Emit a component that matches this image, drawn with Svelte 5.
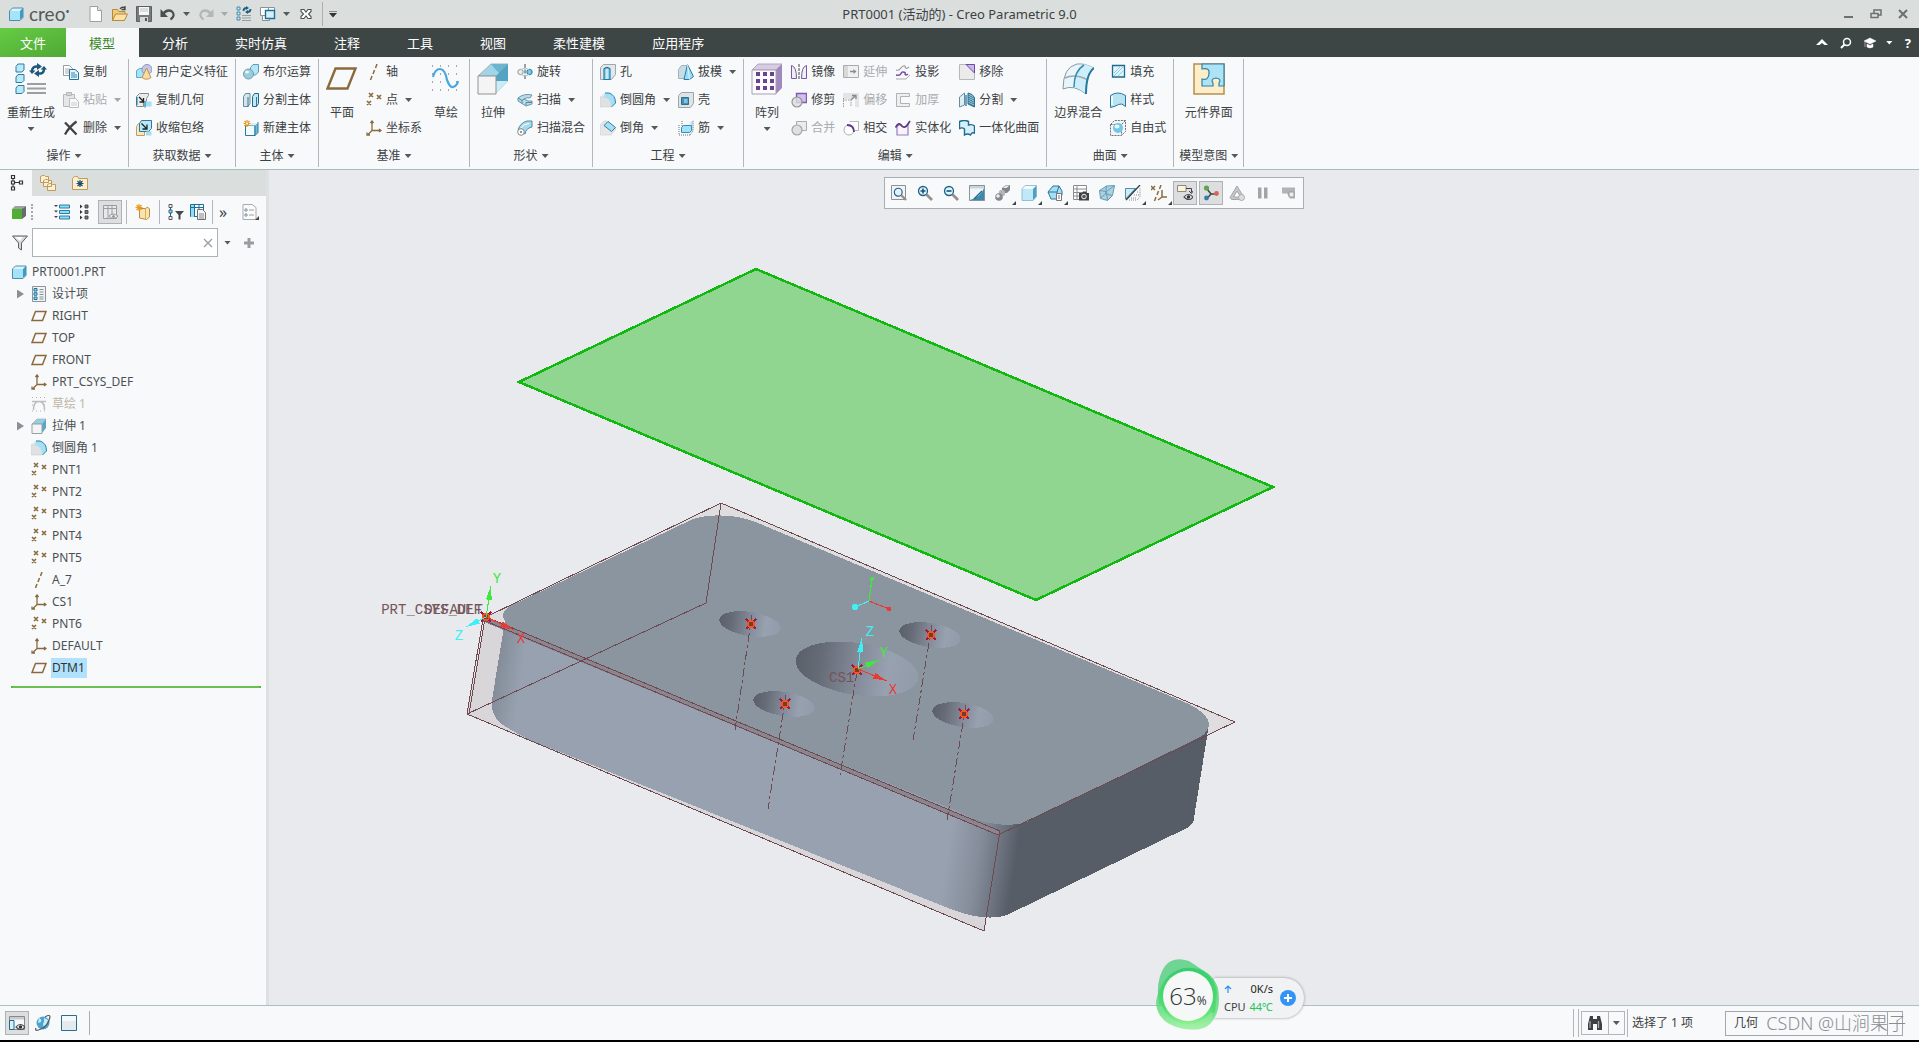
<script lang="ts">
  type Command = { icon: string; name: string; menu?: boolean; off?: boolean };
  type Column = { big?: Command; items?: Command[] };
  type Group = { name: string; columns: Column[] };

  const cube = '<path d="M2 5l3-3h10l-3 3z" fill="#d9f4fd"/><path d="M12 5l3-3v9l-3 3z" fill="#3b9cc4"/><path d="M2 5h10v9H2z" fill="#a5e3f9"/><path d="M1.500 5l3-3H15v9.500l-3 3H1.500z" fill="none" stroke="#4a90ae"/>';
  const plane = '<path d="M4.500 3.500h10.500l-3.500 9h-10.500z" fill="none" stroke="#8a6a3c" stroke-width="1.500"/>';
  const csys = '<path d="M6 1v9.500h9M6 10.500L1.500 15M4.500 3L6 1l1.500 2M13 9l2 1.500-2 1.500M1 12.500V15h3" fill="none" stroke="#8a6a3c" stroke-width="1.300"/>';
  const points = '<path d="M3 1l4 4M7 1L3 5M11 3l4 4M15 3l-4 4M1 9l4 4M5 9l-4 4" stroke="#8a6a3c" stroke-width="1.600"/>';
  const axis = '<path d="M11 0L9.500 4M8.500 6L7 10M6 12l-1.500 4" stroke="#8a6a3c" stroke-width="1.500"/>';
  const round = '<path d="M0 5l4-4h7l-6 4z" fill="#e6e9ea"/><path d="M0 5h5q6 1 6 10H0z" fill="#dfe1e2" stroke="#c4c8ca" stroke-width=".5"/><path d="M5 1h4q7 3 6.500 10l-4 4Q11 6 4 5z" fill="#a5dff5"/><path d="M5 1h4q6.500 2 6.500 10l-4 4" fill="none" stroke="#2781aa"/>';
  const extrude = '<path d="M1 6l5-5h9l-4 5z" fill="#8ed0e8" stroke="#a9afb2" stroke-width=".7"/><path d="M11 6l4-5v9l-4 5z" fill="#5aa6c7"/><path d="M1 6h10v9.500H1z" fill="#f3f4f4" stroke="#9a9fa1"/>';
  const regen = '<g fill="#c4ecfa" stroke="#2b7697" stroke-width=".8"><path d="M1 1h3v3H1zM1 6h3v3H1zM1 11h3v3H1z"/></g><path d="M6 9.500h9M6 12h9M6 14.500h9" stroke="#9a9da0"/><path d="M7.500 5Q7.500 2 10.500 2M14.500 3Q14.500 6 11.500 6" fill="none" stroke="#1c5f85" stroke-width="1.800"/><path d="M10 0l3 2-3 2zM12 4L9 6l3 2z" fill="#1c5f85"/>';
  const lens = '<circle cx="6" cy="6" r="4.500" fill="#e0f4fb" stroke="#1c6288" stroke-width="1.300"/><path d="M9.500 9.500L15 15" stroke="#9b8c85" stroke-width="2.600"/>';
  const eye = '<path d="M7 12q4-5 9 0-4 5-9 0z" fill="#fff" stroke="#45494b" stroke-width="1.200"/><circle cx="11.500" cy="12" r="1.800" fill="#333"/>';
  const chips = '<g fill="#8fdcf8" stroke="#1d6f98" stroke-width=".9"><path d="M5.500 1h10v3h-10zM5.500 6.500h10v3h-10zM5.500 12h10v3h-10z"/></g><path d="M0 1h4L2 3zM0 6.500h4L2 8.500zM0 12h4L2 14z" fill="#444"/>';

  const icons: Record<string, string> = {
    cube, plane, csys, points, axis, round, extrude, regen,
    newFile: '<path d="M2 .5h7.500L13.500 4.500v11H2z" fill="#fff" stroke="#9a9fa2"/><path d="M9.500.5v4h4" fill="#e3e5e6" stroke="#9a9fa2"/>',
    open: '<path d="M.5 14.500V3.500h5l1.500 2h6v3" fill="#f3c97a" stroke="#b58a3d"/><path d="M.5 14.500L3.500 8h12l-3 6.500z" fill="#fde1a4" stroke="#b58a3d"/><path d="M8 3q2-3 5-1M13 0v3.500h-3.500" fill="none" stroke="#444" stroke-width="1.300"/>',
    save: '<path d="M.5.5h15v15H.5z" fill="#777b7e" stroke="#5d6163"/><path d="M3 1h10v8H3z" fill="#f5f6f7"/><path d="M4 11h8v5H4z" fill="#d5d8da"/><path d="M9 12h2v3H9z" fill="#555"/><path d="M4 3h8M4 5h8" stroke="#c1c5c7"/>',
    undo: '<path d="M2.500 8.500Q7 2.500 12 5.500q4 4-1.500 8" fill="none" stroke="#4a4f50" stroke-width="2.200"/><path d="M.5 3v8h7.500z" fill="#4a4f50"/>',
    redo: '<path d="M13.500 8.500Q9 2.500 4 5.500q-4 4 1.500 8" fill="none" stroke="#b3b7b7" stroke-width="2.200"/><path d="M15.500 3v8H8z" fill="#b3b7b7"/>',
    windows: '<path d="M.5 1.500h9v8h-9z" fill="#fff" stroke="#8b9093"/><path d="M8.500 1.500h6v4h-6zM2.500 9.500h7v5h-7z" fill="#fff" stroke="#8b9093"/><path d="M5.500 4.500h9v8h-9z" fill="#d5f0fa" stroke="#1d6f98" stroke-width="1.400"/>',
    close: '<path d="M3 3.500h3L8 6l2-2.500h3v2L10.500 8 13 10.500v2h-3L8 10l-2 2.500H3v-2L5.500 8 3 5.500z" fill="#fff" stroke="#4c5152" stroke-width="1.100"/>',
    copy: '<path d="M.5 1.500h6l3 3v7h-9z" fill="#fff" stroke="#999d9f"/><path d="M2 5h5M2 7h5M2 9h4" stroke="#aaa"/><path d="M6.500 5.500h5.500l3.500 3v7h-9z" fill="#e4f6fc" stroke="#247298"/><path d="M8 9h4M8 11h6M8 13h6" stroke="#3586ab"/>',
    paste: '<path d="M.5 2.500h11v12H.5z" fill="#e5e6e6" stroke="#b5b8b9"/><path d="M3.500.5h5v3h-5z" fill="#d3d5d6" stroke="#b5b8b9"/><path d="M6.500 6.500h6l3 3v6h-9z" fill="#fafafa" stroke="#bbbebf"/><path d="M8 11h6M8 13h6" stroke="#c9cbcc"/>',
    remove: '<path d="M2 2.500q5 5 11.500 12M13.500 1.500Q6 7 2 14.500" fill="none" stroke="#3e4243" stroke-width="2.300"/>',
    udf: '<path d="M.5 6.500l3-2h6v7l-2 2h-7z" fill="#a5e3f9" stroke="#64a9c5"/><circle cx="11" cy="5.500" r="5" fill="#c5c9e6" stroke="#8d93bd"/><path d="M10.500 4L15 13.500q-4.500 3.500-9 0z" fill="#f7dba2" stroke="#bb9550"/>',
    copyGeom: '<path d="M.5 4.500l3-3h9v2l-2 3v3h-3v5h-7z" fill="#e9ebec" stroke="#868c8f"/><path d="M.5 5v8" stroke="#277ca6" stroke-width="2"/><path d="M3 5l4 4M7.500 6v4h-4" stroke="#222" fill="none" stroke-width="1.300"/><path d="M8.500 9.500h7v5h-7z" fill="#9fe0f7"/><path d="M9 9.500v6" stroke="#1d6f98"/>',
    shrink: '<path d="M.5 6.500l2-3h11v8h-5v4h-8z" fill="#fbe6bd" stroke="#b9a06d"/><path d="M3.500 3.500l2-3h10v8l-3 3h-9z" fill="#b9e8f8" stroke="#287a9f"/><path d="M5.500 3.500l5 5M11 4.500V9H6.500" stroke="#222" fill="none" stroke-width="1.300"/><path d="M10 11.500h5.500v4H10z" fill="#9fe0f7"/>',
    boolean: '<path d="M7.500 3.500l2.500-3h5.500V8l-3 3h-5z" fill="#b4e6f8" stroke="#5c9cb8"/><circle cx="5.500" cy="10" r="5" fill="#9ccbdd" stroke="#6e9cad"/><ellipse cx="4" cy="8" rx="2" ry="1.500" fill="#e9f7fb"/>',
    splitBody: '<path d="M.5 4.500l2-3h4.500v10l-2 3H.5z" fill="#d2e5ec" stroke="#678c9c"/><path d="M9.500 4.500l2-3h4v10l-2 3h-4z" fill="#c0e9f7" stroke="#1f668a"/><path d="M5 5v10M13.500 5v10" stroke="#3d7590"/>',
    newBody: '<path d="M2.500 5.500h9.500v10H2.500z" fill="#f1fbfe" stroke="#287a9f"/><path d="M12 5.500l3-3v10l-3 3z" fill="#72bcd8" stroke="#287a9f"/><path d="M6 3h9l-3 2.500H5z" fill="#d9f2fa"/><path d="M4 0v7M.5 3.500h7M1.500 1l5 5M6.500 1l-5 5" stroke="#e79b1c" stroke-width="1.200"/><circle cx="4" cy="3.500" r="1" fill="#fff"/>',
    revolve: '<path d="M8 0v16" stroke="#444" stroke-dasharray="4 1.500"/><circle cx="3.500" cy="8" r="2.700" fill="#e8e9ea" stroke="#999"/><circle cx="12.500" cy="8" r="2.700" fill="#7cc9e6" stroke="#1f7aa5"/><path d="M4 5.500q4-3 8 0M4 10.500q4 3 8 0" fill="none" stroke="#9ec9d8"/>',
    sweep: '<path d="M1 6q6-5 14-3l-2 3q-3-1-6 1l4 2h4v3l-6 2-8-5z" fill="#b7dcea" stroke="#6d97a8"/><path d="M1 6l4 2.500 2-1.500M5 8.500v3M9 13v-2.500h6" fill="none" stroke="#55889c"/>',
    sweepBlend: '<path d="M1 10Q3 3 10 1h5v6q-6 1-7 7z" fill="#a9daec" stroke="#4d8ca6"/><circle cx="4" cy="12" r="3.300" fill="#fff" stroke="#85898b"/><path d="M4 8q2-4 8-4.500" stroke="#fff" fill="none"/><circle cx="4" cy="12" r="1" fill="#777"/>',
    hole: '<path d="M.5 3.500l3-3h12v10l-4 5H.5z" fill="#e4e7e9" stroke="#a1a6a9"/><path d="M4 15.500V5q3-3 6 0v10.500z" fill="#8fd4ee" stroke="#217aa4" stroke-width="1.200"/><path d="M7 5v10" stroke="#fff"/>',
    chamfer: '<path d="M0 5l4-4h3l9 8-5 6H0z" fill="#e4e6e7" stroke="#c9cccd" stroke-width=".6"/><path d="M8 1.500l7.500 6-4 4-7.500-6z" fill="#a5e1f6" stroke="#1f7199" stroke-width=".9"/>',
    draft: '<path d="M.5 5.500l3-4h6l-1 13H.5z" fill="#c6dde5" stroke="#a2b2b8"/><path d="M9.500.5l6 12-4 3H6z" fill="#9cdcf4" stroke="#277ba2"/><path d="M9.500.5l2 15" stroke="#d9f5fd"/>',
    shell: '<path d="M.5 3.500l3-3h12v11l-3 4H.5z" fill="#dfe3e5" stroke="#9fa4a6"/><path d="M3.500 5.500h7v7h-7z" fill="#4d8eab" stroke="#287294"/><path d="M6 7h3.500v4H6z" fill="#7cc8e4"/>',
    rib: '<path d="M1 5v10h11M4 1v10M15 1v10l-3 4" stroke="#6e7375" stroke-dasharray="1 1" fill="none"/><path d="M4.500 6l8-1V2l3-2v11l-4 2h-7z" fill="#b0d2de" opacity=".7"/><path d="M3.500 7.500l2-2h8v5l-2 2h-8z" fill="#9fe3fb" stroke="#3d8cae"/>',
    mirror: '<path d="M8 0v16" stroke="#444" stroke-dasharray="3 1"/><path d="M.5 14.500v-13q5 1 5 13zM15.500 14.500v-13q-5 1-5 13z" fill="#f1edf6" stroke="#755b9d"/>',
    trim: '<path d="M5.500 1.500h10v9h-10z" fill="#cfc0f0" stroke="#7e5cb0" stroke-width="1.400"/><circle cx="6" cy="10" r="5" fill="#ddd" fill-opacity=".8" stroke="#929597" stroke-width="1.200"/>',
    merge: '<path d="M5.500 1.500h10v9h-10z" fill="#ececec" stroke="#aaadad"/><circle cx="6" cy="10" r="5" fill="#e0e0e0" stroke="#a3a6a6" stroke-width="1.200"/>',
    extend: '<path d="M.5 1.500h15v12H.5z" fill="#f0f0f0" stroke="#a9acad"/><path d="M1 2h4v11H1z" fill="#d8d9d9"/><path d="M7 7.500h5" stroke="#8a8d8e" stroke-width="1.500"/><path d="M10.500 5l3 2.500-3 2.500z" fill="#8a8d8e"/>',
    offset: '<path d="M0 1h16v14h-4V7H0z" fill="#e3e4e4"/><path d="M.5 6v9M0 8h8v7" fill="none" stroke="#999" stroke-dasharray="1.500 1"/><path d="M8 8l4-4M9 3.500h4V7" fill="none" stroke="#888" stroke-width="1.300"/>',
    intersect: '<path d="M6.500 1.500h9v9h-7" fill="#fff" stroke="#b6b8b9"/><circle cx="6" cy="10" r="5" fill="#fff" stroke="#adb0b1"/><path d="M4 5q7 0 7 7" fill="none" stroke="#5f3a93" stroke-width="1.800"/>',
    project: '<path d="M1 6q3 1 5-2t4-2q0 4 4 1" fill="none" stroke="#94979a" stroke-width="1.200"/><path d="M1 11q4 1 5-1.500t4-1q0 4 3 1.500" fill="none" stroke="#7a4ba5" stroke-width="1.600"/><path d="M1 15h10l4-4" fill="none" stroke="#a9acae"/>',
    thicken: '<path d="M14.500 1.500H1.500v13h13v-3H5.500v-7h9z" fill="#eee" stroke="#b0b2b3"/>',
    solidify: '<path d="M2 15V6.500q3-3 5 0 3 2 6-2.500V15z" fill="#f7f2fc" stroke="#9a7bbd" stroke-width="1.200"/><path d="M.5 7.500Q4 1 7 6q3 3 6-2l2-3" fill="none" stroke="#5c3b86" stroke-width="1.700"/>',
    removeSurface: '<path d="M.5.5h15v15H.5z" fill="#ebebeb" stroke="#b6b9ba"/><path d="M7 .5h8.500V9z" fill="#c8b8ea" stroke="#7148a2"/>',
    split: '<path d="M.5 5l5-4v12l-5 2z" fill="#ddeef4" stroke="#6a8d9c"/><path d="M7 3v11" stroke="#2c7596" stroke-width="1.300"/><path d="M9 1l4 1.500 2.500 3V15L9 12z" fill="#7fbcd3" stroke="#2c6c8a"/><path d="M10 3v9M12 4v9M14 5v9" stroke="#205a77" stroke-dasharray="1 1"/>',
    unify: '<path d="M.5 1.500q5-2 9 0V5q4-1 6 1v7q-3-1-4 2-3-2-6 0V9q-2-2-5-.5z" fill="#d5f0fa" stroke="#1f6a8f" stroke-width="1.400"/>',
    fill: '<path d="M2.500 1.500h12v11.500h-12z" fill="#dff4fb" stroke="#1f6a8f" stroke-width="1.300"/><path d="M4 9l6-6M4 12l9-9M8 12l5-5" stroke="#8fcbe2"/>',
    style: '<path d="M.5 3.500q7-5 15 0v11q-4-4-7-2t-8 3z" fill="#b8e3f3" stroke="#2c7596"/><path d="M2 4v9" stroke="#fff" stroke-width="1.500"/>',
    freestyle: '<path d="M.5 4.500h11v11H.5zM.5 4.500l4-4h11v11l-4 4M15.500.5l-4 4" fill="#f3f4f5" stroke="#6b7073" stroke-dasharray="2 1"/><circle cx="8" cy="8" r="5" fill="#74c6e8"/><ellipse cx="7" cy="6.500" rx="2.500" ry="2" fill="#e3f7fd"/>',
    collector: '<path d="M3.500.5h3v3h-3zM3.500 6h3v3h-3zM3.500 12h3v3h-3zM11.500 6h3v3h-3z" fill="none" stroke="#333" stroke-width="1.200"/><path d="M5 4v2M5 9v3M7 7.500h4" stroke="#333"/>',
    folders: '<g fill="#fdf0d2" stroke="#c19a5a"><path d="M.5 1.500l2-1h2l1 1h3v6h-8zM3.500 5.500l2-1h2l1 1h3v6h-8zM7.500 9.500l2-1h2l1 1h3v6h-8z"/></g>',
    favorites: '<path d="M.5 3.500q1-2 3-2h2l1 2h9v11H.5z" fill="#fdf0d2" stroke="#c19a5a"/><path d="M8 5v7M4.500 8.500h7M5.500 6l5 5M10.500 6l-5 5" stroke="#1c4f6e" stroke-width="1.200"/>',
    greenCube: '<path d="M1 5l3-3h11l-3 3z" fill="#9da1a3"/><path d="M11 5l4-3v10l-4 3z" fill="#686c6e"/><path d="M1 5h10v10H1z" fill="#4fae33"/>',
    expand: chips,
    collapse: '<g fill="#777" stroke="#444" stroke-width=".9"><path d="M9 1h3v3H9zM9 6.500h3v3H9zM9 12h3v3H9z"/></g><path d="M4 .5v4l2.500-2zM4 6v4l2.500-2zM4 11.500v4l2.500-2z" fill="#333"/>',
    columns: '<path d="M1.500 1.500h13v13h-13zM1.500 4.500h13M6 2v12M10 2v9" fill="#e7e8e9" stroke="#999d9f"/><path d="M7 12q4-4 9 0-4 5-9 0z" fill="#eee" stroke="#999"/><circle cx="11.500" cy="12.500" r="1.500" fill="#999"/>',
    newTree: '<path d="M4.500 4.500h6l2-1.500 2 2v8l-3 2.500-7-1.500z" fill="#fbe3ae" stroke="#b98d3e"/><path d="M10.500 5v10.500" stroke="#d6b069"/><path d="M4 0v7M.5 3.500h7M1.500 1l5 5M6.500 1l-5 5" stroke="#ea9c1e" stroke-width="1.200"/>',
    treeFilter: '<path d="M1 .5h3v3H1zM1 12.500h3v3H1z" fill="#fff" stroke="#555"/><path d="M1 6h3v3H1z" fill="#8fdcf8" stroke="#1d6f98"/><path d="M2.500 3.500V6M2.500 9v3.500" stroke="#555"/><path d="M7 7h9l-3.500 4v4.500h-2V11z" fill="#45494b"/>',
    treeColumns: '<path d="M.5.5h13v12H.5z" fill="#fff" stroke="#1d6f98"/><path d="M1 1h3v12H1z" fill="#8fdcf8"/><path d="M4.500 1v12M9 1v4M1 3.500h12" stroke="#1d6f98"/><path d="M7.500 5.500h5l3 3v7h-8z" fill="#f4f4f4" stroke="#6b7072"/><path d="M9 10h5M9 12h5M9 14h5" stroke="#85898b"/>',
    sheet: '<path d="M1 .5h9l4 3v12H1z" fill="#fbfbfb" stroke="#a7abad"/><circle cx="4" cy="6" r="1.200" fill="none" stroke="#6d8d99"/><circle cx="4" cy="11" r="1.200" fill="none" stroke="#6d8d99"/><path d="M7 6h5M7 11h5" stroke="#9a9ea0"/>',
    funnel: '<path d="M.5 1h15L9.500 8v7l-3-2V8z" fill="#d5d7d9" stroke="#5d6264"/><path d="M3 2h8L8 6z" fill="#fff"/>',
    design: '<path d="M1.500.5h13v15h-13z" fill="#eef5f8" stroke="#8c9497"/><path d="M3 2.500h3v2.500H3zM3 6.700h3v2.500H3zM3 11h3v2.500H3z" fill="#9bdcf5" stroke="#1d6f98"/><path d="M8.500 3.500h4M8.500 6h4M8.500 8.500h4M8.500 11h4M8.500 13h4" stroke="#8b8f91"/>',
    sketchOff: '<path d="M2.500 14q0-8.500 5.500-8.500t5.500 8.500M1 5.500h14" fill="none" stroke="#bdbfbf" stroke-width="1.600"/><path d="M1 1.500h15M1 9h3M13 9h3M1 15h15" stroke="#b9b3a2" stroke-dasharray="1 3"/>',
    zoomFit: '<path d="M.5.5h14v14H.5z" fill="#f2f3f4" stroke="#8d9294"/><g transform="translate(2 2) scale(.87)">' + lens + '</g>',
    zoomIn: lens + '<path d="M3.500 6h5M6 3.500v5" stroke="#1c4f6e" stroke-width="1.600"/>',
    zoomOut: lens + '<path d="M3.500 6h5" stroke="#1c4f6e" stroke-width="1.600"/>',
    repaint: '<path d="M.5.5h15v15H.5z" fill="#3c8aae" stroke="#8d9294"/><path d="M1 3h14q-3 9-14 12z" fill="#f3f7f8"/><path d="M1 1h14v2.500H1z" fill="#c5d5db"/><path d="M5 14l8-8" stroke="#1f6a8f" stroke-width="1.500"/>',
    render: '<path d="M7 3l4-3h4v5l-3 3H7z" fill="#808587"/><circle cx="7" cy="8" r="3.200" fill="#b2b6b8"/><circle cx="4" cy="12" r="3.800" fill="#858a8c"/><circle cx="3" cy="11" r="1.800" fill="#eee"/><path d="M8 3l3-2.500h3.500L11.500 3z" fill="#eee"/>',
    display: '<path d="M1 4l3-3.500h11.500L12 4z" fill="#f1fafd"/><path d="M12 4l3.500-3.500v11L12 15.500z" fill="#4e9fc0"/><path d="M1 4h11v11.500H1z" fill="#bfe9f8"/><path d="M1 4l3-3.500h11.500v11L12 15.500H1z" fill="none" stroke="#7fb4c9" stroke-width=".8"/>',
    saved: '<path d="M1 7l5-6h6l3 5v4l-3 4H4z" fill="#a5dff4" stroke="#2b7697"/><path d="M1 7h9l2-6M10 7v7" fill="none" stroke="#2b7697"/><path d="M9.500 8.500h5v7h-5z" fill="#fff" stroke="#777"/><path d="M11 11h2M11 13h2" stroke="#777"/>',
    viewManager: '<path d="M.5.5h13v14H.5zM4 1v13M1 4h12M1 7.500h12M1 11h12" fill="#fff" stroke="#888d90"/><path d="M6 8h3l1-1.500h3L14 8h2v7.500H6z" fill="#3e4243"/><circle cx="11" cy="11.500" r="2.300" fill="#555" stroke="#eee"/>',
    perspective: '<path d="M.5 5.500l7-4.500 8-.5-2 10-5 5-7-2z" fill="#a9d3e3" stroke="#6b9cb0"/><path d="M.5 5.500l7 1 8-6M7.500 6.500l1 9M7.500 1l-1 8-5 4M6.500 9l7 1.500" fill="none" stroke="#6b9cb0"/>',
    section: '<path d="M.5 3.500h10L.5 14z" fill="#cdebf6" stroke="#2b7697" stroke-width=".8"/><path d="M4 15h8l3-3V3M6 13h6M9 10h5M12 7h2" fill="none" stroke="#888" stroke-dasharray="1 1"/><path d="M1 15L15 0" stroke="#34393b" stroke-width="1.300"/>',
    datums: '<path d="M0 1l4 4M4 1L0 5M10 0L8.500 4M7.500 6L6 10M5 12l-1.500 4M11 5v7h5M11 12l-4 3" fill="none" stroke="#8a6a3c" stroke-width="1.500"/>',
    annotations: '<path d="M.5.5h8.500v6H.5z" fill="#fff4d6" stroke="#888"/><path d="M9 3.500h5.500v4M12 6l2.500 2.500L16 6" fill="none" stroke="#444"/>' + eye,
    spin: '<path d="M4 4l4 5M8 9h6M8 9l-4 4.500" stroke="#444" stroke-width="1.500"/><circle cx="3.500" cy="3" r="2.600" fill="#5aa74b"/><circle cx="13.500" cy="8.500" r="2.400" fill="#d66557"/><circle cx="3.500" cy="13" r="2.400" fill="#2f7faa"/>',
    simulate: '<path d="M8 1l7 11.500-1.500 2h-11L1 12.500z" fill="#c5c8c9" stroke="#a3a6a8"/><path d="M8 6l3.500 6h-7z" fill="#fff" stroke="#a3a6a8"/><circle cx="12.500" cy="12.500" r="3" fill="#ddd" stroke="#aaa"/>',
    pause: '<path d="M3 2.500h3.500v11H3zM9 2.500h3.500v11H9z" fill="#a2a5a7"/>',
    stop: '<path d="M1 2.500h13v11H9l-3-5H1z" fill="#b1b4b6"/><path d="M8 7h5v5H8z" fill="#ececec" stroke="#999"/>',
    navigator: '<path d="M.5 1.500h15v13H.5z" fill="#f7f7f7" stroke="#85898b"/><path d="M1 2h14v2.500H1z" fill="#c9cccd"/><path d="M.5 5.500h4.500v9H.5z" fill="#d8eff7" stroke="#1f6a8f"/>' + eye,
    browser: '<circle cx="8" cy="8" r="6.500" fill="#4aa4d3"/><path d="M4 3q3 1 2 4L3 8M9 3l4 2-1 5-3 2q-2-3 0-5z" fill="#cbeaf6"/><path d="M1 13q-2 4 5 1t9-12q0-3-5 0" fill="none" stroke="#555b5e" stroke-width="1.200"/>',
    fullscreen: '<path d="M.5.5h15v15H.5z" fill="#e3ebee" stroke="#2b6e8c"/><path d="M1 1h14v5H1z" fill="#f4f8f9"/>',
    find: '<path d="M3 1h3v3h4V1h3l2 8v6h-5V9H6v6H1V9z" fill="#3c4042"/><path d="M3 6v7M11.500 6v7" stroke="#a3a7a9" stroke-width="1.300"/>'
  };

  const bigIcons: Record<string, string> = {
    regenerate: '<g fill="#b8ebfa" stroke="#337b9b"><path d="M1 3.500l2-2.500h6v6l-2 2H1zM1 14l2-2.500h6v6l-2 2H1zM1 25l2-2.500h6v6l-2 2H1z"/></g><path d="M12 21h19M12 25.500h19M12 30h19" stroke="#9c9ea0" stroke-width="2"/><path d="M17 8q0-5 6-4.500M29 6q0 5-6 4.500" fill="none" stroke="#1c587b" stroke-width="2.500"/><path d="M22 0l5 3.500-5 3.500zM24 7l-5 3.500 5 3.500zM14 7.500h6.500L17 11zM25.500 6.500H32L29 3z" fill="#1c587b"/>',
    plane: '<path d="M9.500 5.500h20l-8 20H1.500z" fill="none" stroke="#8a6a3c" stroke-width="2.400"/>',
    sketch: '<path d="M2 3h28M2 11h28M2 19h28M2 27h28" stroke="#555" stroke-dasharray="1 7"/><path d="M3 14Q5 6 10 6t7 11q3 8 6 7 4-1 5-6" fill="none" stroke="#49a9df" stroke-width="2.200"/>',
    extrude: '<path d="M1 13L14 1h17L20 13z" fill="#9fd5e8" stroke="#a9b0b3"/><path d="M14 1h17v17L19 7z" fill="#6fb4cf"/><path d="M19 13L31 1v17L19 30z" fill="#56a2c3"/><path d="M19 18l12 0L19 30z" fill="#c9ecf7"/><path d="M1 13h18v18H1z" fill="#f4f4f4" stroke="#8f9496"/>',
    pattern: '<path d="M1 7l6-6h24L25 7z" fill="#d6cde2" stroke="#b3a6c4"/><path d="M25 7l6-6v24l-6 6z" fill="#a189bf"/><path d="M1 7h24v24H1z" fill="#fbfafc" stroke="#a8a0b3"/><path d="M5 9h4v4H5zM12 9h4v4h-4zM19 9h4v4h-4zM5 16h4v4H5zM12 16h4v4h-4zM19 16h4v4h-4zM5 23h4v4H5zM12 23h4v4h-4zM19 23h4v4h-4z" fill="#684390"/>',
    blend: '<path d="M1 26Q1 4 15 1q7-1 17 4-8 5-8 26-12-10-23-5z" fill="#e8f6fb" stroke="#86999f"/><path d="M15 1q7-1 17 4-8 5-8 26-7-6-12-7Q12 6 22 1" fill="#cdeefa"/><path d="M3 15q10-5 23 2" fill="none" stroke="#9aa9af" stroke-width="1.500"/><path d="M12 24Q12 8 22 2" fill="none" stroke="#388cac" stroke-width="1.500"/><path d="M32 5q-8 6-8 26" fill="none" stroke="#287a9b" stroke-width="2"/>',
    component: '<path d="M1 1h30v30H1z" fill="#fdedc9" stroke="#b58f4c" stroke-width="1.500"/><path d="M9 1h22v22h-5v-3q3-4-3-5-6 1-3 5v3H9v-7q6 2 7-5t-7-5z" fill="#aee3f6" stroke="#2d83a6" stroke-width="1.200"/>'
  };

  const groups: Group[] = [
    { name: '操作', columns: [
      { big: { icon: 'regenerate', name: '重新生成', menu: true } },
      { items: [{ icon: 'copy', name: '复制' }, { icon: 'paste', name: '粘贴', menu: true, off: true }, { icon: 'remove', name: '删除', menu: true }] }
    ] },
    { name: '获取数据', columns: [
      { items: [{ icon: 'udf', name: '用户定义特征' }, { icon: 'copyGeom', name: '复制几何' }, { icon: 'shrink', name: '收缩包络' }] }
    ] },
    { name: '主体', columns: [
      { items: [{ icon: 'boolean', name: '布尔运算' }, { icon: 'splitBody', name: '分割主体' }, { icon: 'newBody', name: '新建主体' }] }
    ] },
    { name: '基准', columns: [
      { big: { icon: 'plane', name: '平面' } },
      { items: [{ icon: 'axis', name: '轴' }, { icon: 'points', name: '点', menu: true }, { icon: 'csys', name: '坐标系' }] },
      { big: { icon: 'sketch', name: '草绘' } }
    ] },
    { name: '形状', columns: [
      { big: { icon: 'extrude', name: '拉伸' } },
      { items: [{ icon: 'revolve', name: '旋转' }, { icon: 'sweep', name: '扫描', menu: true }, { icon: 'sweepBlend', name: '扫描混合' }] }
    ] },
    { name: '工程', columns: [
      { items: [{ icon: 'hole', name: '孔' }, { icon: 'round', name: '倒圆角', menu: true }, { icon: 'chamfer', name: '倒角', menu: true }] },
      { items: [{ icon: 'draft', name: '拔模', menu: true }, { icon: 'shell', name: '壳' }, { icon: 'rib', name: '筋', menu: true }] }
    ] },
    { name: '编辑', columns: [
      { big: { icon: 'pattern', name: '阵列', menu: true } },
      { items: [{ icon: 'mirror', name: '镜像' }, { icon: 'trim', name: '修剪' }, { icon: 'merge', name: '合并', off: true }] },
      { items: [{ icon: 'extend', name: '延伸', off: true }, { icon: 'offset', name: '偏移', off: true }, { icon: 'intersect', name: '相交' }] },
      { items: [{ icon: 'project', name: '投影' }, { icon: 'thicken', name: '加厚', off: true }, { icon: 'solidify', name: '实体化' }] },
      { items: [{ icon: 'removeSurface', name: '移除' }, { icon: 'split', name: '分割', menu: true }, { icon: 'unify', name: '一体化曲面' }] }
    ] },
    { name: '曲面', columns: [
      { big: { icon: 'blend', name: '边界混合' } },
      { items: [{ icon: 'fill', name: '填充' }, { icon: 'style', name: '样式' }, { icon: 'freestyle', name: '自由式' }] }
    ] },
    { name: '模型意图', columns: [{ big: { icon: 'component', name: '元件界面' } }] }
  ];

  const tabs = ['模型', '分析', '实时仿真', '注释', '工具', '视图', '柔性建模', '应用程序'];
  let activeTab = $state('模型');

  const tree = [
    { icon: 'design', name: '设计项', open: true },
    { icon: 'plane', name: 'RIGHT' },
    { icon: 'plane', name: 'TOP' },
    { icon: 'plane', name: 'FRONT' },
    { icon: 'csys', name: 'PRT_CSYS_DEF' },
    { icon: 'sketchOff', name: '草绘 1', off: true },
    { icon: 'extrude', name: '拉伸 1', open: true },
    { icon: 'round', name: '倒圆角 1' },
    { icon: 'points', name: 'PNT1' },
    { icon: 'points', name: 'PNT2' },
    { icon: 'points', name: 'PNT3' },
    { icon: 'points', name: 'PNT4' },
    { icon: 'points', name: 'PNT5' },
    { icon: 'axis', name: 'A_7' },
    { icon: 'csys', name: 'CS1' },
    { icon: 'points', name: 'PNT6' },
    { icon: 'csys', name: 'DEFAULT' },
    { icon: 'plane', name: 'DTM1' }
  ];
  let selected = $state('DTM1');

  const viewTools = [
    { icon: 'zoomFit' }, { icon: 'zoomIn' }, { icon: 'zoomOut' }, { icon: 'repaint' },
    { icon: 'render', more: true }, { icon: 'display', more: true }, { icon: 'saved', more: true },
    { icon: 'viewManager' }, { icon: 'perspective' }, { icon: 'section', more: true },
    { icon: 'datums', more: true }, { icon: 'annotations', on: true }, { icon: 'spin', on: true },
    { icon: 'simulate' }, { icon: 'pause' }, { icon: 'stop' }
  ];

  const holes = [[750, 624], [784, 704], [930, 635], [963, 715]];
  const marks = [[751, 624], [785, 704], [931, 635], [964, 714], [857, 670], [486, 617]];
  const axes = [
    [752, 615, 735, 730],
    [786, 695, 768, 809],
    [932, 625, 913, 740],
    [966, 705, 947, 820],
    [857, 672, 840, 775]
  ];
</script>

{#snippet icon(name: string)}
  <svg class="icon" viewBox="0 0 16 16" width="16" height="16" aria-hidden="true">{@html icons[name]}</svg>
{/snippet}

{#snippet arrow(x1: number, y1: number, x2: number, y2: number, color: string)}
  <g stroke={color} fill={color}>
    <line {x1} {y1} {x2} {y2} />
    <path
      stroke="none"
      transform="translate({x2} {y2}) rotate({(Math.atan2(y2 - y1, x2 - x1) * 180) / Math.PI})"
      d="M0 0l-14-3v6z"
    />
  </g>
{/snippet}

<div class="app">
  <header class="title-bar">
    <div class="brand">{@render icon('cube')}<span>creo<sup>•</sup></span></div>
    <div class="quick">
      <button aria-label="新建">{@render icon('newFile')}</button>
      <button aria-label="打开">{@render icon('open')}</button>
      <button aria-label="保存">{@render icon('save')}</button>
      <button aria-label="撤消">{@render icon('undo')}<i class="caret"></i></button>
      <button class="off" aria-label="重做">{@render icon('redo')}<i class="caret"></i></button>
      <button aria-label="重新生成">{@render icon('regen')}</button>
      <button aria-label="窗口">{@render icon('windows')}<i class="caret"></i></button>
      <button aria-label="关闭">{@render icon('close')}</button>
      <button class="customize" aria-label="自定义快速访问工具栏"><i class="caret"></i></button>
    </div>
    <h1>PRT0001 (活动的) - Creo Parametric 9.0</h1>
    <div class="window-buttons">
      <button aria-label="最小化"><svg viewBox="0 0 12 12" width="12" height="12"><path d="M1 9h9" stroke-width="2" /></svg></button>
      <button aria-label="还原"><svg viewBox="0 0 12 12" width="12" height="12"><path d="M4 5V2h7v5H8M1 5.500h7v4H1z" stroke-width="1.500" /></svg></button>
      <button aria-label="关闭窗口"><svg viewBox="0 0 12 12" width="12" height="12"><path d="M2 2l8 8M10 2l-8 8" stroke-width="2" /></svg></button>
    </div>
  </header>

  <nav class="tabs">
    <button class="file">文件</button>
    {#each tabs as tab}
      <button class:active={tab === activeTab} onclick={() => (activeTab = tab)}>{tab}</button>
    {/each}
    <div class="help">
      <button aria-label="最小化功能区"><svg viewBox="0 0 12 12" width="12" height="12"><path d="M0 8l6-6 6 6H8.500L6 6 3.500 8z" fill="#fff" /></svg></button>
      <button aria-label="搜索"><svg viewBox="0 0 12 12" width="12" height="12"><circle cx="7" cy="5" r="3.500" fill="none" stroke="#fff" stroke-width="1.500" /><path d="M4.500 7.500L1 11" stroke="#fff" stroke-width="2" /></svg></button>
      <button class="learn" aria-label="学习"><svg viewBox="0 0 12 12" width="12" height="12"><path d="M0 4l6-3 6 3-6 3zM3 7l3 1.500L9 7v3q-3 2-6 0zM1 5v5" fill="#fff" stroke="#fff" stroke-width=".5" /></svg><i class="caret"></i></button>
      <button class="question">?</button>
    </div>
  </nav>

  <section class="ribbon">
    {#each groups as group}
      <div class="group">
        <div class="columns">
          {#each group.columns as { big, items }}
            {#if big}
              <button class="big">
                <svg viewBox="0 0 32 32" width="32" height="32" aria-hidden="true">{@html bigIcons[big.icon]}</svg>
                <span>{big.name}</span>
                {#if big.menu}<i class="caret"></i>{/if}
              </button>
            {:else if items}
              <div class="column">
                {#each items as item}
                  <button class="command" disabled={item.off}>
                    {@render icon(item.icon)}<span>{item.name}</span>
                    {#if item.menu}<i class="caret"></i>{/if}
                  </button>
                {/each}
              </div>
            {/if}
          {/each}
        </div>
        <button class="group-name">{group.name}<i class="caret"></i></button>
      </div>
    {/each}
  </section>

  <main>
    <aside>
      <div class="panel-tabs">
        <button class="active" aria-label="模型树">{@render icon('collector')}</button>
        <button aria-label="文件夹浏览器">{@render icon('folders')}</button>
        <button aria-label="收藏夹">{@render icon('favorites')}</button>
      </div>
      <div class="tree-tools">
        <button class="root-type" aria-label="模型">{@render icon('greenCube')}</button>
        <button aria-label="全部展开">{@render icon('expand')}</button>
        <button aria-label="全部折叠">{@render icon('collapse')}</button>
        <button class="on" aria-label="树列">{@render icon('columns')}</button>
        <button class="bar" aria-label="新建树">{@render icon('newTree')}</button>
        <button class="bar" aria-label="树过滤器">{@render icon('treeFilter')}</button>
        <button aria-label="列显示">{@render icon('treeColumns')}</button>
        <button class="bar overflow" aria-label="更多">»</button>
        <button class="more settings" aria-label="设置">{@render icon('sheet')}</button>
      </div>
      <div class="search">
        {@render icon('funnel')}
        <div class="box">
          <input type="text" aria-label="过滤模型树" />
          <button aria-label="清除"><svg viewBox="0 0 10 10" width="10" height="10"><path d="M1 1l8 8M9 1L1 9" stroke="#9a9d9f" stroke-width="1.300" /></svg></button>
        </div>
        <button aria-label="过滤选项"><i class="caret"></i></button>
        <button aria-label="添加"><svg viewBox="0 0 12 12" width="12" height="12"><path d="M6 1v10M1 6h10" stroke="#9a9d9f" stroke-width="3" /></svg></button>
      </div>
      <ul class="tree">
        <li class="root">{@render icon('cube')}<span>PRT0001.PRT</span></li>
        {#each tree as node}
          <li class:off={node.off} class:selected={node.name === selected}>
            <i class="twist" class:open={node.open}></i>
            {@render icon(node.icon)}
            <button onclick={() => (selected = node.name)}>{node.name}</button>
          </li>
        {/each}
      </ul>
      <div class="insert-here"></div>
    </aside>

    <div class="viewport">
      <svg class="scene" viewBox="269 170 1650 835">
        <defs>
          <linearGradient id="front" gradientUnits="userSpaceOnUse" x1="946" y1="862" x2="1014" y2="872">
            <stop offset="0" stop-color="#98a1b0" />
            <stop offset=".45" stop-color="#858d9b" />
            <stop offset=".75" stop-color="#6d7480" />
            <stop offset="1" stop-color="#575d67" />
          </linearGradient>
          <linearGradient id="corner" gradientUnits="userSpaceOnUse" x1="497" y1="665" x2="523" y2="669">
            <stop offset="0" stop-color="#838c98" />
            <stop offset="1" stop-color="#838c98" stop-opacity="0" />
          </linearGradient>
          <linearGradient id="bore">
            <stop offset=".03" stop-color="#5c616b" />
            <stop offset=".2" stop-color="#666c76" />
            <stop offset=".5" stop-color="#838b99" />
            <stop offset=".75" stop-color="#98a1b0" />
            <stop offset="1" stop-color="#929baa" />
          </linearGradient>
        </defs>

        <path class="datum" d="M756 269l517 218-237 113-517-218z" />

        <g fill="#d9d6d9">
          <path d="M486 617l514 214-16 100-517-217z" />
          <path d="M486 617l235-114 514 219-235 109z" fill="#dfddde" />
        </g>

        <path fill="url(#front)" d="M507 608L492 700q-2 12 8 23 25 17 60 29l393 158q33 12 54 5l180-87q7-4 7-10l15-94-184 88z" />
        <path fill="url(#corner)" d="M507 608L492 700q-2 12 8 23l26 14 14-120z" />
        <path fill="#8b95a0" d="M508 607l185-88q20-6 45-2 10 2 20 6l424 178q24 10 27 22 0 9-9 14l-173 85q-20 6-46-1L530 637q-26-10-27-21 0-4 5-9z" />

        {#each holes as [x, y]}
          <ellipse rx="31" ry="12" transform="translate({x} {y}) rotate(9)" fill="url(#bore)" />
        {/each}
        <ellipse rx="62" ry="26" transform="translate(857 669) rotate(9)" fill="url(#bore)" />

        <path d="M486 617l514 214-2 4-516-214z" fill="#8b858f" />
        <g class="wire">
          <path d="M486 617L721 503l514 219-237 113M721 503l-15 100L467 714" />
          <path d="M486 617l514 214-16 100-517-217 16-95z" />
          <path d="M483 620l515 215M485 618l-16 96" />
          {#each axes as [x1, y1, x2, y2]}
            <line {x1} {y1} {x2} {y2} stroke-dasharray="9 3 3 3" />
          {/each}
        </g>

        <g class="tag">
          <text x="482" y="614" text-anchor="end">PRT_CSYS_DEF</text>
          <text x="483" y="614" text-anchor="end">DEFAULT</text>
          <text x="829" y="682">CS1</text>
        </g>

        {#each marks as [x, y]}
          <g transform="translate({x} {y})">
            <path d="M-5-5L5 5M5-5L-5 5" stroke="#a81446" stroke-width="2" />
            <circle r="3" fill="#7c3a26" stroke="#ef5a20" stroke-width="1.500" />
          </g>
        {/each}

        {@render arrow(486, 617, 491, 586, '#3fe83f')}
        {@render arrow(486, 617, 514, 630, '#ea3a34')}
        {@render arrow(486, 617, 466, 627, '#3cf0f6')}
        {@render arrow(858, 669, 862, 638, '#3cf0f6')}
        {@render arrow(858, 669, 879, 660, '#3fe83f')}
        {@render arrow(858, 669, 887, 681, '#ea3a34')}

        <g class="axis-name">
          <text x="497" y="583" fill="#3fe83f">Y</text>
          <text x="521" y="643" fill="#ea3a34">X</text>
          <text x="459" y="640" fill="#3cf0f6">Z</text>
          <text x="870" y="636" fill="#3cf0f6">Z</text>
          <text x="884" y="657" fill="#3fe83f">Y</text>
          <text x="893" y="694" fill="#ea3a34">X</text>
        </g>

        <g stroke-width="1.200">
          <path d="M869 601l3-22" stroke="#3fe83f" /><circle cx="872" cy="579" r="2" fill="#3fe83f" />
          <path d="M869 601l-14 6" stroke="#3cf0f6" /><circle cx="855" cy="607" r="3" fill="#3cf0f6" />
          <path d="M869 601l20 8" stroke="#ea3a34" /><circle cx="889" cy="609" r="2.500" fill="#ea3a34" />
        </g>
      </svg>

      <div class="view-tools">
        {#each viewTools as tool}
          <button class:on={tool.on} class:more={tool.more} aria-label={tool.icon}>{@render icon(tool.icon)}</button>
        {/each}
      </div>
    </div>
  </main>

  <footer>
    <div class="toggles">
      <button class="on" aria-label="导航器">{@render icon('navigator')}</button>
      <button aria-label="浏览器">{@render icon('browser')}</button>
      <button aria-label="全屏">{@render icon('fullscreen')}</button>
    </div>
    <div class="status">
      <div class="find">
        <button aria-label="查找">{@render icon('find')}</button>
        <button aria-label="查找选项"><i class="caret"></i></button>
      </div>
      <output>选择了 1 项</output>
      <select aria-label="选择过滤器">
        <option>几何</option>
      </select>
      <span class="watermark">CSDN @山涧果子</span>
    </div>
  </footer>

  <div class="monitor">
    <svg class="ring" viewBox="0 0 66 72" width="66" height="72" aria-hidden="true">
      <defs>
        <linearGradient id="glow" x2="0" y2="1">
          <stop offset="0" stop-color="#35cf6b" />
          <stop offset=".7" stop-color="#4fdc6f" />
          <stop offset="1" stop-color="#8df08c" />
        </linearGradient>
      </defs>
      <path d="M4 46Q0 22 10 8 18-2 34 3l12 8q14 8 16 24l-2 20z" fill="#2fc866" opacity=".65" />
      <path d="M1 44q4-26 28-34 26-2 34 20 4 24-8 36-8 8-26 5Q2 66 1 44z" fill="url(#glow)" opacity=".75" />
      <circle cx="33" cy="38" r="28" fill="url(#glow)" />
      <circle cx="33" cy="38" r="25" fill="#f6f7f7" />
    </svg>
    <div class="load">63<small>%</small></div>
    <div class="meters">
      <div><svg viewBox="0 0 8 8" width="8" height="8"><path d="M4 8V1M1 4l3-3 3 3" fill="none" stroke="#2f8ef0" stroke-width="1.200" /></svg><b>0K/s</b></div>
      <div><span>CPU</span><em>44℃</em></div>
    </div>
    <button aria-label="加速"><svg viewBox="0 0 16 16" width="16" height="16"><circle cx="8" cy="8" r="8" fill="#3494f5" /><path d="M8 4v8M4 8h8" stroke="#fff" stroke-width="2" /></svg></button>
  </div>
</div>

<style>
  :global(body) {
    margin: 0;
    overflow: hidden;
  }

  .app {
    position: relative;
    display: flex;
    flex-direction: column;
    height: 100vh;
    box-sizing: border-box;
    border-bottom: 2px solid #000;
    background: #f8f9fb;
    color: #3c4143;
    font: 12px/16px 'Noto Sans', 'Noto Sans CJK SC', sans-serif;
  }

  button,
  input,
  select {
    margin: 0;
    padding: 0;
    border: none;
    background: none;
    color: inherit;
    font: inherit;
  }

  button {
    display: flex;
    align-items: center;
    white-space: nowrap;
  }

  svg {
    display: block;
    flex: none;
  }

  .caret {
    flex: none;
    width: 7px;
    height: 4px;
    background: #55595b;
    clip-path: polygon(0 0, 100% 0, 50% 100%);
  }

  /* title bar */
  .title-bar {
    position: relative;
    display: flex;
    align-items: center;
    height: 28px;
    background: #dadfde;
  }

  .brand {
    display: flex;
    align-items: center;
    gap: 5px;
    padding-left: 8px;
    color: #54595a;
    font: 19px/24px Lato, sans-serif;
  }

  .brand span {
    width: 43px;
  }

  .brand sup {
    font-size: 7px;
    line-height: 0;
    vertical-align: 7px;
  }

  .quick {
    display: flex;
    gap: 8px;
    padding-left: 16px;
  }

  .quick button {
    gap: 7px;
  }

  .quick .off .caret {
    background: #a3a8a8;
  }

  .quick .customize {
    height: 24px;
    padding-left: 6px;
    border-left: 1px solid #a9b0af;
  }

  .customize .caret {
    width: 8px;
    height: 7px;
    background: #333;
    clip-path: polygon(0 0, 100% 0, 100% 15%, 0 15%, 0 35%, 100% 35%, 50% 100%, 0 35%);
  }

  h1 {
    position: absolute;
    left: 0;
    right: 0;
    margin: 0;
    font-size: 13px;
    font-weight: 400;
    text-align: center;
    pointer-events: none;
  }

  .window-buttons {
    display: flex;
    gap: 15px;
    margin-left: auto;
    padding-right: 10px;
  }

  .window-buttons path {
    fill: none;
    stroke: #6b7070;
  }

  /* tabs */
  .tabs {
    display: flex;
    height: 29px;
    background: #3d4545;
    color: #fff;
    font-size: 13px;
  }

  .tabs > button {
    padding: 0 24px 0 23px;
  }

  .tabs .file {
    padding: 0 20px;
    background: linear-gradient(160deg, #66cc44, #4fa835);
  }

  .tabs .active {
    background: #f8f9fb;
    color: #3f8a28;
  }

  .help {
    display: flex;
    align-items: center;
    gap: 12px;
    margin-left: auto;
    padding-right: 8px;
  }

  .help .caret {
    background: #fff;
  }

  .learn {
    gap: 10px;
  }

  .question {
    font-weight: 700;
  }

  /* ribbon */
  .ribbon {
    display: flex;
    height: 112px;
    border-bottom: 1px solid #a9bdb8;
  }

  .group {
    display: flex;
    flex-direction: column;
    margin: 2px 0;
    border-right: 1px solid #b3b7b9;
  }

  .columns {
    flex: 1;
    display: flex;
    align-items: flex-start;
    justify-content: center;
    gap: 8px;
    padding: 0 7px;
  }

  .column {
    display: flex;
    flex-direction: column;
    gap: 2px;
  }

  .command {
    gap: 4px;
    height: 26px;
  }

  .command .caret {
    margin-left: 3px;
  }

  .command:disabled {
    color: #a9acae;
  }

  .command:disabled .caret {
    background: #a3a6a8;
  }

  .big {
    flex-direction: column;
    min-width: 32px;
    padding-top: 4px;
  }

  .big span {
    margin: 10px 0 6px;
  }

  .group-name {
    justify-content: center;
    gap: 4px;
    height: 26px;
    padding: 4px 5px 0;
  }

  /* model tree */
  main {
    flex: 1;
    display: flex;
    min-height: 0;
  }

  aside {
    width: 266px;
    border-right: 3px solid #dde1e1;
  }

  .panel-tabs {
    display: flex;
    height: 26px;
    background: #dadfde;
  }

  .panel-tabs button {
    justify-content: center;
    width: 32px;
  }

  .panel-tabs .active {
    background: #f8f9fb;
  }

  .tree-tools {
    display: flex;
    align-items: center;
    height: 32px;
    padding: 0 8px 0 11px;
    gap: 6px;
  }

  .tree-tools .root-type {
    padding-right: 4px;
    margin-right: 15px;
    border-right: 2px dotted #a5a9ab;
  }

  .tree-tools .on,
  .view-tools .on,
  .toggles .on {
    justify-content: center;
    width: 24px;
    height: 24px;
    box-sizing: border-box;
    border: 1px solid #aeb2b4;
    background: #dcdee0;
  }

  .tree-tools .bar {
    height: 24px;
    padding-left: 8px;
    border-left: 1px solid #b3b7b9;
  }

  .tree-tools .bar + .bar {
    margin-left: 2px;
  }

  .tree-tools .on + .bar {
    margin-left: -2px;
  }

  .tree-tools .overflow {
    padding-left: 6px;
    font-size: 16px;
  }

  .tree-tools .settings {
    margin-left: auto;
  }

  .more {
    position: relative;
  }

  .more::after {
    content: '';
    position: absolute;
    right: -1px;
    bottom: 0;
    border: 2px solid #444;
    border-top-color: transparent;
    border-left-color: transparent;
  }

  .search {
    display: flex;
    align-items: center;
    gap: 6px;
    padding-left: 12px;
  }

  .box {
    display: flex;
    align-items: center;
    width: 184px;
    margin-left: -2px;
    border: 1px solid #a9b5b5;
    background: #fff;
  }

  .box input {
    flex: 1;
    min-width: 0;
    height: 27px;
    padding: 0 6px;
    outline: none;
  }

  .box button {
    padding: 4px;
  }

  .search > button + button {
    margin-left: 6px;
  }

  .tree {
    margin: 0;
    padding: 4px 0 0 11px;
    list-style: none;
    color: #4b5052;
  }

  .tree li {
    display: flex;
    align-items: center;
    height: 22px;
  }

  .tree .root {
    gap: 5px;
  }

  .twist {
    width: 7px;
    height: 9px;
    margin: 0 7px 0 6px;
  }

  .twist.open {
    background: #8b8f91;
    clip-path: polygon(0 0, 100% 50%, 0 100%);
  }

  .tree li button {
    height: 20px;
    margin-left: 4px;
    padding: 0 2px 0 1px;
  }

  .tree .off button {
    color: #bdb7a6;
  }

  .tree .selected button {
    background: #b0e2fd;
    color: #2f3436;
  }

  .insert-here {
    height: 2px;
    margin: 7px 5px 0 11px;
    border: solid #56b344;
    border-width: 0 2px;
    background: #6cc053;
  }

  /* graphics area */
  .viewport {
    position: relative;
    flex: 1;
    min-width: 0;
    background: #e8eaed;
  }

  .scene {
    width: 100%;
    height: 100%;
    shape-rendering: crispEdges;
  }

  .datum {
    fill: #90d590;
    stroke: #10b810;
    stroke-width: 2.5;
  }

  .wire {
    fill: none;
    stroke: #6e4a50;
  }

  .tag text {
    fill: #74545a;
    font: 14px 'Liberation Mono', monospace;
  }

  .axis-name text {
    font: 14px 'Liberation Mono', monospace;
    text-anchor: middle;
  }

  .view-tools {
    position: absolute;
    top: 7px;
    left: 50%;
    display: flex;
    gap: 2px;
    padding: 3px 2px;
    border: 1px solid #a9aeb0;
    background: #f8f9fb;
    transform: translateX(-50%);
  }

  .view-tools button {
    justify-content: center;
    width: 24px;
    height: 24px;
  }

  /* status bar */
  footer {
    display: flex;
    align-items: center;
    height: 34px;
    border-top: 1px solid #aebfbe;
  }

  .toggles {
    display: flex;
    align-items: center;
    gap: 10px;
    height: 24px;
    padding: 0 12px 0 5px;
    border-right: 1px solid #a9adaf;
  }

  .toggles .on {
    margin-right: -4px;
  }

  .status {
    position: relative;
    display: flex;
    align-items: center;
    margin-left: auto;
    padding-right: 16px;
  }

  .find {
    display: flex;
    margin-right: 4px;
    padding: 2px;
    border: solid #b3b7b9;
    border-width: 0 1px;
  }

  .find::before {
    content: '';
    margin: -2px 2px -2px -8px;
    border-left: 1px solid #b3b7b9;
    padding-right: 5px;
  }

  .find button {
    height: 24px;
    padding: 0 5px;
    box-sizing: border-box;
    border: 1px solid #b3b7b9;
  }

  .find button + button {
    padding: 0 4px;
    border-left: none;
  }

  output {
    margin-right: 32px;
  }

  select {
    width: 178px;
    height: 25px;
    padding: 0 8px;
    box-sizing: border-box;
    border: 1px solid #a3a7a9;
    appearance: none;
    background: linear-gradient(#a3a7a9, #a3a7a9) right 14px top / 1px 100% no-repeat;
  }

  .watermark {
    position: absolute;
    right: 13px;
    color: #8b8e90;
    font-size: 18px;
    font-weight: 300;
    pointer-events: none;
  }

  /* system monitor floating over the window */
  .monitor {
    position: absolute;
    right: 615px;
    bottom: 22px;
    display: flex;
    align-items: center;
    gap: 7px;
    width: 90px;
    height: 40px;
    padding: 0 8px 0 10px;
    box-sizing: border-box;
    border-radius: 0 20px 20px 0;
    background: #f1f2f3;
    box-shadow: 0 0 3px #8d9192;
  }

  .ring {
    position: absolute;
    right: 83px;
    bottom: -12px;
  }

  .load {
    position: absolute;
    right: 83px;
    width: 66px;
    color: #303436;
    font: 300 24px/24px 'Open Sans', sans-serif;
    text-align: center;
  }

  .load small {
    font-size: 12px;
    font-weight: 400;
  }

  .meters {
    flex: 1;
    font-size: 11px;
    line-height: 18px;
  }

  .meters div {
    display: flex;
    align-items: center;
    justify-content: space-between;
  }

  .meters b {
    color: #222;
    font-weight: 400;
  }

  .meters em {
    color: #22c55b;
    font-style: normal;
  }
</style>
